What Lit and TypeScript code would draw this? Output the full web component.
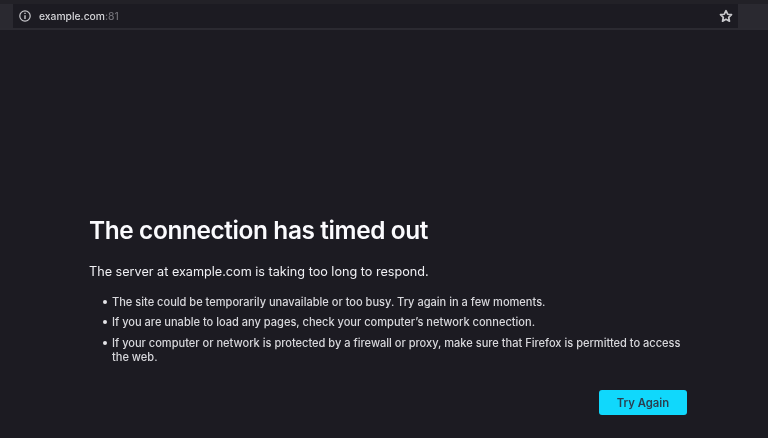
import { LitElement, html, css } from "lit";
import { customElement } from "lit/decorators.js";

@customElement("app-root")
export class AppRoot extends LitElement {
  static styles = css`
    :host {
      display: flex;
      flex-direction: column;
      width: 768px;
      height: 438px;
      overflow: hidden;
      background: #1c1b22;
      color: #fbfbfe;
      font-family: Inter, "Liberation Sans", sans-serif;
    }
    .toolbar {
      box-sizing: border-box;
      height: 30px;
      flex: none;
      padding: 0 30px 0 13px;
      background: #2a2930;
      border-top: 4px solid #222127;
      border-bottom: 2px solid #2b2a31;
    }
    .urlbar {
      height: 24px;
      display: flex;
      align-items: center;
      gap: 8px;
      padding: 0 5px 0 6px;
      background: #1c1b22;
      filter: blur(0.45px);
    }
    .info, .star {
      flex: none;
      display: block;
    }
    .url {
      flex: 1;
      font-size: 10.3px;
      font-weight: 500;
      color: #d4d4d8;
    }
    .port {
      color: #6f6e75;
    }
    .content {
      flex: 1;
      padding: 185px 81px 0 89px;
      filter: blur(0.5px);
    }
    h1 {
      margin: 0;
      font-size: 24.4px;
      line-height: 30px;
      font-weight: 600;
      letter-spacing: -0.38px;
    }
    p {
      margin: 18px 0 0;
      font-size: 12.65px;
      line-height: 18px;
      font-weight: 400;
      color: #f0f0f4;
    }
    ul {
      list-style: none;
      margin: 13.5px 0 0;
      padding: 0 0 0 14px;
      font-size: 11.05px;
      line-height: 14px;
      font-weight: 500;
      color: #d8d8dc;
    }
    li {
      display: flex;
      gap: 5px;
      margin-bottom: 6.5px;
    }
    li::before {
      content: "";
      flex: none;
      width: 4px;
      height: 4px;
      margin-top: 5px;
      border-radius: 50%;
      background: #e4e4e8;
    }
    .actions {
      display: flex;
      justify-content: flex-end;
      margin-top: 26.5px;
    }
    button {
      width: 88px;
      height: 25px;
      border: none;
      border-radius: 3px;
      background: #10d8fc;
      color: #2b3f50;
      font-family: inherit;
      font-size: 11.3px;
      font-weight: 600;
      padding: 0;
    }
  `;

  render() {
    return html`
      <div class="toolbar">
        <div class="urlbar">
          <svg class="info" width="12" height="12" viewBox="0 0 12 12" fill="none" stroke="#c8c8cc" stroke-width="1.2">
            <circle cx="6" cy="6" r="5.2"></circle>
            <path d="M6 5.2V9" stroke-width="1.4"></path>
            <path d="M6 2.7v1.4" stroke-width="1.4"></path>
          </svg>
          <span class="url">example.com<span class="port">:81</span></span>
          <svg class="star" width="14" height="14" viewBox="0 0 15 15" fill="none" stroke="#c8c8cc" stroke-width="1.8" stroke-linejoin="round">
            <path d="M7.5 1.8l1.8 3.8 4.1.5-3 2.9.8 4.1-3.7-2-3.7 2 .8-4.1-3-2.9 4.1-.5z"></path>
          </svg>
        </div>
      </div>
      <div class="content">
        <h1>The connection has timed out</h1>
        <p>The server at example.com is taking too long to respond.</p>
        <ul>
          <li><span>The site could be temporarily unavailable or too busy. Try again in a few moments.</span></li>
          <li><span>If you are unable to load any pages, check your computer’s network connection.</span></li>
          <li><span>If your computer or network is protected by a firewall or proxy, make sure that Firefox is permitted to access the web.</span></li>
        </ul>
        <div class="actions"><button>Try Again</button></div>
      </div>
    `;
  }
}
